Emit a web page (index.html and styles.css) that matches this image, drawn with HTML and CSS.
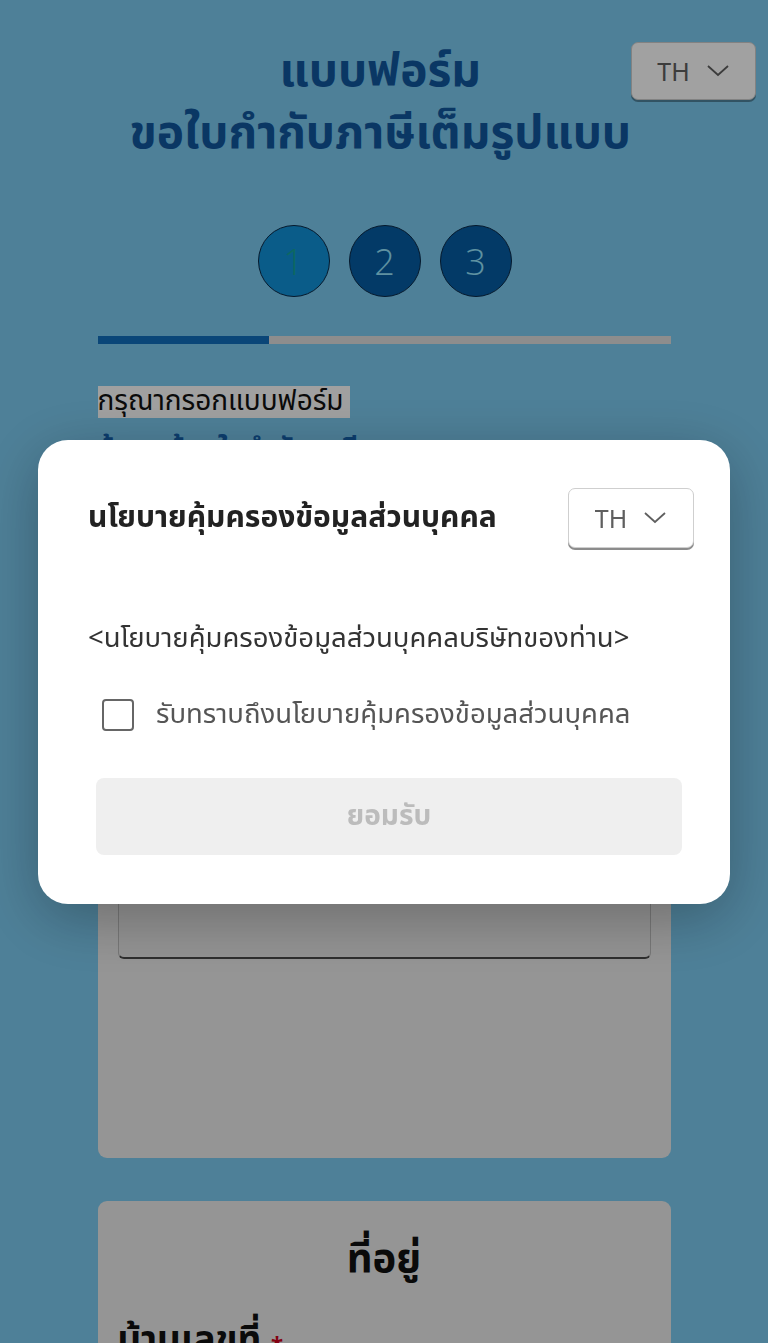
FILE: index.html
```html
<!DOCTYPE html>
<html lang="th">
<head>
<meta charset="utf-8">
<title>แบบฟอร์มขอใบกำกับภาษีเต็มรูปแบบ</title>
<link rel="stylesheet" href="styles.css">
</head>
<body>
<div class="page">
  <header class="header">
    <div class="header-side"></div>
    <h1 class="title">แบบฟอร์ม<br>ขอใบกำกับภาษีเต็มรูปแบบ</h1>
    <div class="header-side header-right">
      <button class="lang lang-page">TH
        <svg class="chev" viewBox="0 0 24 14" width="24" height="14"><path d="M2 2 L12 11 L22 2" fill="none" stroke="currentColor" stroke-width="1.8"/></svg>
      </button>
    </div>
  </header>

  <div class="steps">
    <div class="step step-active">1</div>
    <div class="step">2</div>
    <div class="step">3</div>
  </div>

  <main class="content">
    <div class="progress"><div class="progress-fill"></div></div>

    <p class="hint"><span class="hint-mark">กรุณากรอกแบบฟอร์ม</span></p>
    <h2 class="section-title">ข้อมูลผู้ขอใบกำกับภาษี</h2>

    <section class="card card-info">
      <label class="field-label">ชื่อ - นามสกุล <span class="req">*</span></label>
      <div class="input"></div>
      <label class="field-label">เลขประจำตัวผู้เสียภาษี <span class="req">*</span></label>
      <div class="input"></div>
      <label class="field-label">หมายเหตุ</label>
      <div class="input input-tall"></div>
    </section>

    <section class="card card-address">
      <h3 class="card-title">ที่อยู่</h3>
      <label class="field-label field-label-lg">บ้านเลขที่ <span class="req">*</span></label>
      <div class="input"></div>
    </section>
  </main>
</div>

<div class="overlay">
  <div class="modal">
    <div class="modal-head">
      <h2 class="modal-title">นโยบายคุ้มครองข้อมูลส่วนบุคคล</h2>
      <button class="lang lang-modal">TH
        <svg class="chev" viewBox="0 0 24 14" width="24" height="14"><path d="M2 2 L12 11 L22 2" fill="none" stroke="currentColor" stroke-width="1.8"/></svg>
      </button>
    </div>
    <p class="modal-text">&lt;นโยบายคุ้มครองข้อมูลส่วนบุคคลบริษัทของท่าน&gt;</p>
    <label class="check-row">
      <span class="checkbox"></span>
      <span class="check-label">รับทราบถึงนโยบายคุ้มครองข้อมูลส่วนบุคคล</span>
    </label>
    <button class="accept" disabled>ยอมรับ</button>
  </div>
</div>
</body>
</html>
```

FILE: styles.css
```css
* { box-sizing: border-box; }
html, body { margin: 0; padding: 0; }
body {
  background: #7ccbf1;
  font-family: "Noto Sans Thai", "Noto Sans", "DejaVu Sans", sans-serif;
  color: #111;
  height: 1343px;
  overflow: hidden;
}
.page { padding-top: 41px; }

.header {
  display: grid;
  grid-template-columns: 1fr auto 1fr;
  align-items: start;
}
.header-right { display: flex; justify-content: flex-end; padding-right: 12px; }
.title {
  margin: 0;
  text-align: center;
  font-size: 46px;
  line-height: 62px;
  font-weight: 700;
  color: #11589f;
  white-space: nowrap;
}

.lang {
  display: flex;
  align-items: center;
  justify-content: center;
  gap: 16px;
  background: #fff;
  border: 1px solid #cfcfcf;
  border-radius: 7px;
  font-family: "Noto Sans", "Open Sans", sans-serif;
  font-size: 25px;
  color: #5f5f5f;
  padding: 0;
  box-shadow: 0 2px 0 rgba(0,0,0,0.35);
}
.lang-page { width: 125px; height: 58px; margin-top: 1px; }
.chev { display: block; }

.steps {
  display: flex;
  justify-content: center;
  gap: 19px;
  margin-top: 60px;
  padding-left: 1px;
}
.step {
  width: 72px;
  height: 72px;
  border-radius: 50%;
  background: #065ca3;
  border: 1.5px solid #082847;
  display: flex;
  align-items: center;
  justify-content: center;
  font-family: "Open Sans", "Noto Sans", sans-serif;
  font-weight: 300;
  font-size: 36px;
  color: #97e6ff;
}
.step-active { background: #1092d9; color: #15a59c; }

.content {
  width: 573px;
  margin: 39px auto 0;
}
.progress {
  height: 8px;
  background: #e0e0e0;
}
.progress-fill { width: 30%; height: 100%; background: #106fbe; }

.hint {
  margin: 42px 0 0;
  font-size: 28px;
  line-height: 32px;
  height: 32px;
}
.hint-mark {
  display: inline-block;
  height: 32px;
  line-height: 32px;
  background: #fdfdfd;
  padding-right: 6px;
  overflow: visible;
}

.section-title {
  margin: 14px 0 0;
  font-size: 28px;
  line-height: 36px;
  color: #1362af;
}

.card {
  background: #ececec;
  border-radius: 9px;
  padding: 20px;
  display: flex;
  flex-direction: column;
}
.card-info { height: 676px; margin-top: 14px; }
.card-address { margin-top: 43px; padding-top: 24px; }

.field-label {
  font-size: 24px;
  line-height: 36px;
  font-weight: 700;
  margin-top: 8px;
}
.field-label-lg { font-size: 37px; line-height: 48px; margin-top: 22px; }
.req { color: #d0021b; font-size: 0.6em; }
.input {
  height: 56px;
  background: #e9e9e9;
  border: 1px solid #bdbdbd;
  border-bottom: 2px solid #4a4a4a;
  border-radius: 6px;
  margin-top: 6px;
}
.input-tall { height: 189px; }

.card-title {
  margin: 0;
  text-align: center;
  font-size: 40px;
  line-height: 70px;
  font-weight: 700;
}

.overlay {
  position: fixed;
  inset: 0;
  background: rgba(0,0,0,0.37);
  display: flex;
  align-items: center;
  justify-content: center;
}
.modal {
  width: 692px;
  height: 464px;
  background: #fff;
  border-radius: 30px;
  padding: 48px 36px 48px 50px;
  box-shadow: 0 14px 60px rgba(0,0,0,0.28);
  display: flex;
  flex-direction: column;
}
.modal-head {
  display: flex;
  justify-content: space-between;
  align-items: center;
}
.modal-title {
  margin: 0;
  font-size: 30px;
  font-weight: 700;
  color: #222;
}
.lang-modal { width: 126px; height: 60px; box-shadow: 0 2px 0 rgba(0,0,0,0.45); }

.modal-text {
  margin: 71px 0 0;
  font-size: 27.5px;
  line-height: 40px;
  color: #333;
}
.check-row {
  display: flex;
  align-items: center;
  gap: 22px;
  margin-top: 38px;
  padding-left: 14px;
}
.checkbox {
  width: 32px;
  height: 32px;
  border: 2px solid #666;
  border-radius: 4px;
  background: #fff;
  flex: none;
}
.check-label { font-size: 27.5px; line-height: 36px; color: #555; white-space: nowrap; }
.accept {
  margin: 45px 0 0 8px;
  width: 586px;
  height: 77px;
  flex: none;
  border: none;
  border-radius: 8px;
  background: #efefef;
  color: #bcbcbc;
  font-family: inherit;
  font-size: 28px;
  font-weight: 700;
}
```
